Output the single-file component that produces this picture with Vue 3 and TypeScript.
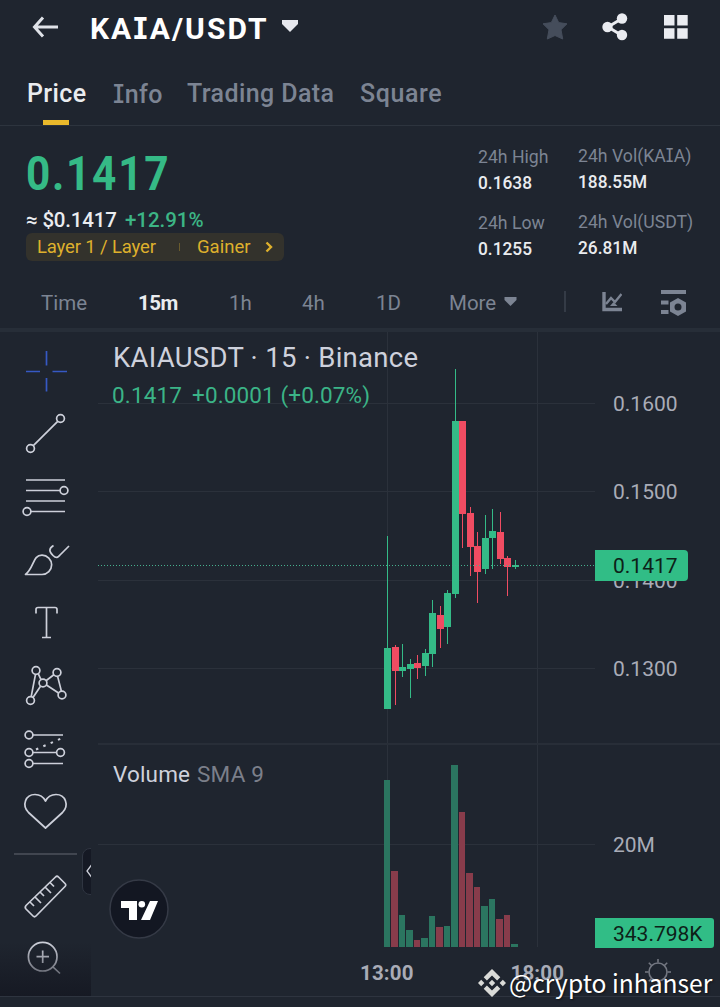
<script setup lang="ts">
interface Candle {
  x: number
  up: boolean
  high: number
  top: number
  bottom: number
  low: number
}
interface VolumeBar {
  x: number
  w: number
  top: number
  up: boolean
}

const tabs = ['Price', 'Info', 'Trading Data', 'Square']
const intervals = ['Time', '15m', '1h', '4h', '1D']

const stats = [
  [
    { label: '24h High', value: '0.1638' },
    { label: '24h Low', value: '0.1255' },
  ],
  [
    { label: '24h Vol(KAIA)', value: '188.55M' },
    { label: '24h Vol(USDT)', value: '26.81M' },
  ],
]

// [left, rising, high, body top, body bottom, low] in chart units
const rawCandles: [number, boolean, number, number, number, number][] = [
  [384, true, 536, 648, 709, 709],
  [392, false, 645, 647, 671, 705],
  [399, true, 644, 667, 671, 677],
  [407, true, 659, 664, 669, 698],
  [414, false, 655, 663, 668, 679],
  [422, true, 649, 653, 666, 676],
  [429, true, 600, 613, 654, 667],
  [437, false, 606, 615, 629, 648],
  [444, true, 590, 593, 627, 644],
  [452, true, 369, 421, 594, 598],
  [459, false, 421, 421, 514, 548],
  [467, false, 507, 513, 547, 576],
  [474, false, 532, 546, 572, 603],
  [482, true, 515, 538, 569, 574],
  [489, true, 509, 531, 538, 569],
  [497, false, 512, 532, 559, 564],
  [504, false, 556, 558, 567, 596],
  [512, true, 560, 565, 567, 569],
]
const candles: Candle[] = rawCandles.map(([x, up, high, top, bottom, low]) => ({ x, up, high, top, bottom, low }))

const volumeTops = [780, 871, 915, 930, 940, 938, 916, 927, 926, 765, 812, 873, 887, 906, 899, 919, 915, 944]
const volumes: VolumeBar[] = volumeTops.map((top, i) => ({
  x: 384 + Math.floor(i * 7.5),
  w: i % 2 ? 7 : 6,
  top,
  up: candles[i].up,
}))

const priceLines = [403, 491, 580, 668, 844]
const axisLabels = [
  { y: 411, text: '0.1600' },
  { y: 499, text: '0.1500' },
  { y: 588, text: '0.1400' },
  { y: 676, text: '0.1300' },
  { y: 852, text: '20M' },
]
const rays = [0, 45, 90, 135, 180, 225, 270, 315]
</script>

<template>
  <div class="screen">
    <header class="header">
      <svg class="back" width="28" height="24" viewBox="0 0 28 24"><path d="M12 2.500 3.500 12l8.500 9.500M3.500 12H27" /></svg>
      <h1 class="pair">KA<span class="slab">I</span>A/USDT</h1>
      <svg class="pair-caret" width="16" height="12" viewBox="0 0 16 12"><path d="M0 0h16v4l-8 8-8-8z" /></svg>
      <div class="actions">
        <svg width="28" height="28" viewBox="0 0 28 28"><path class="star" d="m14 2 3.700 7.600 8.300 1.200-6 5.900 1.700 9.300L14 22.500 6.300 26 8 16.700 2 10.800l8.300-1.200z" /></svg>
        <svg width="28" height="28" viewBox="0 0 28 28" class="share">
          <path d="M7 14 21 5.500M7 14l14 8.500" />
          <circle cx="6.500" cy="14" r="5.200" /><circle cx="21" cy="5.500" r="5.200" /><circle cx="21" cy="22" r="5.200" />
        </svg>
        <svg width="24" height="24" viewBox="0 0 24 24" class="apps"><path d="M0 0h10.500v10.500H0zM13.200 0h10.500v10.500H13.200zM0 13.300h10.500v10.500H0zM13.200 13.300h10.500v10.500H13.200z" /></svg>
      </div>
    </header>

    <nav class="tabs">
      <span v-for="(tab, i) in tabs" :key="tab" class="tab" :class="[{ active: i === 0 }, 'tab-' + i]">
        <template v-if="tab === 'Info'"><span class="slab">I</span>nfo</template>
        <template v-else>{{ tab }}</template>
      </span>
    </nav>

    <section class="summary">
      <div class="quote">
        <div class="last">0.1417</div>
        <div class="fiat"><span class="usd">≈ $0.1417</span><span class="change">+12.91%</span></div>
        <div class="tags">
          <span class="tag-layer">Layer 1 / Layer</span>
          <i class="tag-sep"></i>
          <span class="tag-gainer">Gainer</span>
          <svg width="8" height="12" viewBox="0 0 8 12"><path d="m1.500 1.500 4.500 4.500-4.500 4.500" /></svg>
        </div>
      </div>
      <div v-for="(col, c) in stats" :key="c" class="stats" :class="'stats-' + c">
        <div v-for="s in col" :key="s.label" class="stat">
          <div class="stat-label">
            <template v-if="s.label.includes('KAIA')">24h Vol(KA<span class="slab">I</span>A)</template>
            <template v-else>{{ s.label }}</template>
          </div>
          <div class="stat-value">{{ s.value }}</div>
        </div>
      </div>
    </section>

    <nav class="intervals">
      <span v-for="t in intervals" :key="t" :class="{ chosen: t === '15m' }">{{ t }}</span>
      <span class="more">More<svg width="13" height="9" viewBox="0 0 13 9"><path d="M.5 0h12v3L6.500 9 .5 3z" /></svg></span>
      <i class="divider"></i>
      <svg width="20" height="20" viewBox="0 0 20 20" class="tool-line">
        <path d="M2 0v17.500h18" stroke-width="3.400" /><path d="m4 12 5-6 4 4 6.500-8" stroke-width="2.400" /><path class="solid" d="m8 14 3.500-4 4 4z" />
      </svg>
      <svg width="25" height="26" viewBox="0 0 25 26" class="tool-solid">
        <path d="M0 0h25v4H0zM0 10.500h7.500v4H0zM0 20h7.500v4H0z" />
        <path fill-rule="evenodd" d="m17 8 8 4.500v9L17 26l-8-4.500v-9zM17 13.500a3.500 3.500 0 1 0 0 7 3.500 3.500 0 0 0 0-7z" />
      </svg>
    </nav>

    <main class="workspace">
      <aside class="toolbar">
        <svg class="cross" viewBox="0 0 91 63"><path d="M26 31.500h14M52.500 31.500H67M46.500 11v14.500M46.500 38v13.500" /></svg>
        <svg viewBox="0 0 91 63"><circle cx="60.500" cy="15.500" r="3.900" /><circle cx="30.500" cy="45.500" r="3.900" /><path d="M57.700 18.300 33.300 42.700" /></svg>
        <svg viewBox="0 0 91 63"><path d="M26 14h39M26 24.500h34M26 35h39M31 45.500h34" /><circle cx="64" cy="24.500" r="3.900" /><circle cx="27" cy="45.500" r="3.900" /></svg>
        <svg viewBox="0 0 91 63"><path d="M25.500 45.500H42A9.600 9.600 0 1 0 42 26.200C32.500 26.200 34.500 38 25.500 45.500ZM53.500 16.500C48.500 19.500 49 22.500 53 26.500S58.500 27.500 60.500 25.500L69 17" /></svg>
        <svg viewBox="0 0 91 63"><path d="M36 21.500v-4q0-2 2-2h17q2 0 2 2v4M46.500 15.500v30M42 45.500h9" /></svg>
        <svg viewBox="0 0 91 63">
          <circle cx="36" cy="15.500" r="3.900" /><circle cx="57" cy="17.500" r="3.900" /><circle cx="43" cy="28" r="3.900" /><circle cx="30.500" cy="45.500" r="3.900" /><circle cx="62" cy="40" r="3.900" />
          <path d="M35.500 19.400 31.200 41.600M38.200 18.700l2.800 6M46 25.700l7.800-5.900M57.600 21.400l3.800 14.700M46.400 30l12.200 8M40.500 31.200 33 42.500" />
        </svg>
        <svg viewBox="0 0 91 63">
          <circle cx="29" cy="17" r="3.900" /><circle cx="29" cy="34.500" r="3.900" /><circle cx="60.500" cy="34.500" r="3.900" /><circle cx="29" cy="45.500" r="3.900" />
          <path d="M33 17h30M33 34.500h23.500M33 45.500h30" /><path stroke-dasharray="2.500 5.500" stroke-width="2" d="m36 31.500 25-11" />
        </svg>
        <svg viewBox="0 0 91 63"><path d="M45.500 47 28.500 31.500C21.500 24 25.500 13.500 35 13.500c5.500 0 8.500 2.500 10.500 6.500 2-4 5-6.500 10.500-6.500 9.500 0 13.500 10.500 6.500 18Z" /></svg>
        <hr class="rule" />
        <svg viewBox="0 0 91 63"><path d="M26 40.500 55.500 12q1.500-1.500 3 0l6.500 6.500q1.500 1.500 0 3L36 51q-1.500 1.500-3 0l-7-7q-1.500-1.700 0-3.500ZM30 37l4 4M35 32l6 6M40 27l4 4M45 22l6 6M50 17.500l4 4" /></svg>
        <svg viewBox="0 0 91 63"><circle cx="42.700" cy="28.700" r="14.300" /><path d="M36.500 28.700h12.500M42.700 22.500V35M53 39l7 6.500" /></svg>
        <div class="fade"></div>
        <div class="collapse"><svg width="6" height="14" viewBox="0 0 6 14"><path d="M5.500 1 1 7l4.500 6" /></svg></div>
      </aside>

      <svg class="chart" width="629" height="664" viewBox="91 332 629 664">
        <g class="grid">
          <rect v-for="y in priceLines" :key="y" x="98" :y="y" width="497" height="1" />
          <rect x="387" y="332" width="1" height="615" /><rect x="537" y="332" width="1" height="615" />
          <rect class="pane" x="98" y="743" width="622" height="2" />
        </g>
        <g v-for="(v, i) in volumes" :key="'v' + i" :class="v.up ? 'vol-up' : 'vol-down'">
          <rect :x="v.x" :y="v.top" :width="v.w" :height="947 - v.top" />
        </g>
        <g v-for="(c, i) in candles" :key="'c' + i" :class="c.up ? 'up' : 'down'">
          <rect :x="c.x + 3" :y="c.high" width="1" :height="c.low - c.high" />
          <rect :x="c.x" :y="c.top" width="7" :height="c.bottom - c.top" />
        </g>
        <path class="last-line" d="M98 565.500H595" />

        <text class="symbol" x="113" y="367" textLength="305">KAIAUSDT · 15 · Binance</text>
        <text class="delta" x="112" y="403" textLength="70">0.1417</text>
        <text class="delta" x="192" y="403" textLength="178">+0.0001 (+0.07%)</text>
        <text class="vol-title" x="113" y="782" textLength="77">Volume</text>
        <text class="vol-title dim" x="197" y="782" textLength="67">SMA 9</text>

        <text v-for="l in axisLabels" :key="l.text" class="axis" x="613" :y="l.y">{{ l.text }}</text>
        <path class="badge" d="M595 550h89q4 0 4 4v23q0 4-4 4h-89z" />
        <text class="badge-text" x="613" y="573">0.1417</text>
        <path class="badge" d="M595 918h116q3 0 3 3v24q0 3-3 3h-116z" />
        <text class="badge-text" x="613" y="941">343.798K</text>

        <text class="time" x="360" y="980" textLength="53.500">13:00</text>
        <text class="time" x="510.500" y="980" textLength="53.500">18:00</text>

        <g class="gear">
          <circle cx="658" cy="972" r="9" />
          <path v-for="r in rays" :key="r" d="M667.500 972h3.500" :transform="`rotate(${r} 658 972)`" />
        </g>

        <g class="brand">
          <circle cx="139" cy="909" r="29" />
          <path d="M121 901h16v19h-8v-12h-8zM150 901h8l-8 19h-9z" /><path d="M138.500 904.300a3.300 3.300 0 1 1 6.600 0 3.300 3.300 0 0 1-6.600 0z" />
        </g>
      </svg>
    </main>

    <div class="watermark">
      <svg width="28" height="28" viewBox="0 0 28 28"><path d="m14 0 8.300 8.300-3.200 3.200L14 6.400l-5.100 5.100-3.200-3.200zM3.200 10.800 6.400 14l-3.200 3.200L0 14zM14 10.800l3.200 3.200-3.200 3.200-3.200-3.200zM24.800 10.800 28 14l-3.200 3.200-3.200-3.200zM8.900 16.500l5.100 5.100 5.100-5.100 3.200 3.200L14 28l-8.300-8.300z" /></svg>
      <span>@crypto inhanser</span>
    </div>
  </div>
</template>

<style>
body {
  background: #1f252f;
}
</style>

<style scoped>
.screen {
  position: relative;
  width: 720px;
  height: 1007px;
  overflow: hidden;
  background: #1f252f;
  color: #eaecef;
  font-family: Roboto, "Liberation Sans", sans-serif;
}
svg {
  display: block;
  flex: none;
}
.slab {
  font-family: Inter, Roboto, sans-serif;
  font-feature-settings: "cv08" 1;
}
.header {
  display: flex;
  align-items: center;
  height: 54px;
  padding: 0 32px 0 31px;
}
.back {
  fill: none;
  stroke: #dfe2e8;
  stroke-width: 3;
}
.pair {
  margin: 2px 0 0 31px;
  width: 178px;
  font-size: 30px;
  line-height: 54px;
  font-weight: 700;
  letter-spacing: 2.050px;
  color: #fff;
  white-space: nowrap;
}
.pair-caret {
  margin: -2px 0 0 14px;
  fill: #e6e8ee;
}
.actions {
  display: flex;
  align-items: center;
  margin-left: auto;
}
.actions svg + svg {
  margin-left: 32px;
}
.actions .apps {
  margin-left: 35px;
}
.star {
  fill: #454d5b;
  stroke: #454d5b;
  stroke-linejoin: round;
}
.share {
  fill: #eaecf1;
}
.share path {
  stroke: #eaecf1;
  stroke-width: 3;
}
.apps {
  fill: #eaecf1;
}
.tabs {
  display: flex;
  height: 71px;
  padding: 0 27px;
  border-bottom: 1px solid #2d343e;
}
.tab {
  position: relative;
  line-height: 80px;
  font-size: 25px;
  font-weight: 500;
  letter-spacing: 0.400px;
  color: #7c8493;
  white-space: nowrap;
}
.tab.active {
  color: #eaecef;
}
.tab.active::after {
  content: "";
  position: absolute;
  left: 16px;
  bottom: 0;
  width: 26px;
  height: 5px;
  background: #eab92b;
}
.tab-0 {
  width: 86px;
}
.tab-1 {
  width: 74px;
}
.tab-2 {
  width: 173px;
}
.tab-3 {
  letter-spacing: 0.600px;
}
.summary {
  display: flex;
  height: 152px;
}
.quote {
  width: 452px;
  padding: 17px 0 0 26px;
}
.last {
  font-size: 49px;
  line-height: 60px;
  font-weight: 700;
  letter-spacing: 2px;
  color: #35ba86;
  transform: translateY(1px) scaleX(0.865);
  transform-origin: left;
}
.fiat {
  display: flex;
  margin-top: 4px;
  font-size: 20.500px;
  line-height: 26px;
}
.usd {
  width: 99px;
  font-weight: 500;
  letter-spacing: -0.200px;
}
.change {
  font-weight: 500;
  letter-spacing: -0.050px;
  color: #3cb585;
}
.tags {
  display: flex;
  align-items: center;
  box-sizing: border-box;
  width: 258px;
  height: 28px;
  padding-left: 11px;
  border-radius: 6px;
  background: #33322c;
  color: #deb02c;
  font-size: 18.500px;
}
.tag-layer {
  width: 142px;
  letter-spacing: -0.150px;
}
.tag-sep {
  width: 1px;
  height: 8px;
  margin-right: 17px;
  background: #6a5c2d;
}
.tag-gainer {
  width: 68px;
}
.tags svg {
  fill: none;
  stroke: #deb02c;
  stroke-width: 2.400;
}
.stats {
  display: grid;
  align-content: start;
  gap: 14px;
  padding-top: 18px;
  width: 100px;
}
.stats-1 {
  padding-top: 16px;
  width: 142px;
}
.stat {
  font-size: 18.500px;
  line-height: 26px;
  white-space: nowrap;
}
.stat-label {
  color: #7c8493;
  transform: scaleX(0.955);
  transform-origin: left;
}
.stat-value {
  font-weight: 500;
  transform: scaleX(0.935);
  transform-origin: left;
}
.intervals {
  display: grid;
  grid-template-columns: 97px 91px 73px 74px 73px 115px 38px 59px auto;
  align-items: center;
  height: 50px;
  padding-left: 41px;
  border-bottom: 4px solid #272e38;
  color: #7c8493;
  font-size: 20.500px;
}
.chosen {
  color: #eaecef;
  font-weight: 700;
  letter-spacing: -0.500px;
}
.more {
  display: flex;
  align-items: center;
}
.more svg {
  margin: -4px 0 0 8px;
  fill: #7c8493;
}
.divider {
  width: 2px;
  height: 21px;
  margin-top: -3px;
  background: #343b46;
}
.tool-line {
  margin-top: -2px;
  fill: none;
  stroke: #7c8493;
}
.tool-line .solid {
  fill: #7c8493;
  stroke: none;
}
.tool-solid {
  margin-top: -1px;
  fill: #7c8493;
}
.workspace {
  display: flex;
  height: 664px;
  border-bottom: 1px solid #2e343f;
}
.toolbar {
  position: relative;
  box-sizing: border-box;
  width: 91px;
  height: 664px;
  padding-top: 8px;
  overflow: hidden;
}
.toolbar > svg {
  width: 91px;
  height: 63px;
  fill: none;
  stroke: #cdd0da;
  stroke-width: 1.700;
  stroke-linejoin: round;
}
.toolbar > .cross {
  stroke: #3659c4;
}
.rule {
  height: 2px;
  margin: 9px 14px 10px;
  border: 0;
  background: #414650;
}
.fade {
  position: absolute;
  inset: auto 0 0;
  height: 54px;
  background: linear-gradient(rgba(21, 24, 34, 0), rgba(21, 24, 34, 0.9));
}
.collapse {
  position: absolute;
  left: 82px;
  top: 516px;
  box-sizing: border-box;
  width: 18px;
  height: 47px;
  padding: 15px 0 0 3px;
  border: 1.500px solid #2f3541;
  border-radius: 8px;
  background: #151924;
}
.collapse svg {
  fill: none;
  stroke: #cdd0da;
  stroke-width: 1.300;
}
.grid {
  fill: #2b313b;
}
.grid .pane {
  fill: #282e38;
}
.up {
  fill: #34bb87;
}
.down {
  fill: #f04c62;
}
.vol-up {
  fill: #2b7560;
}
.vol-down {
  fill: #883c4b;
}
.last-line {
  stroke: #46b08e;
  stroke-dasharray: 1 2;
}
.symbol {
  font-size: 27.500px;
  fill: #ced1dc;
}
.delta {
  font-size: 22.500px;
  fill: #3bb487;
  white-space: pre;
}
.vol-title {
  font-size: 22.500px;
  fill: #ced1dc;
}
.vol-title.dim {
  fill: #7b7f8a;
}
.axis {
  font-size: 21px;
  fill: #a9acb7;
}
.badge {
  fill: #31bd86;
}
.badge-text {
  font-size: 21px;
  fill: #0d2118;
}
.time {
  font-size: 20.500px;
  font-weight: 700;
  fill: #a9acb7;
}
.gear {
  fill: none;
  stroke: #737781;
  stroke-width: 1.600;
}
.brand {
  fill: #fff;
}
.brand circle {
  fill: #131722;
  stroke: #353a46;
  stroke-width: 1.500;
}
.watermark {
  position: absolute;
  left: 478px;
  top: 965px;
  display: flex;
  align-items: center;
  gap: 3px;
  height: 36px;
  font-family: "Noto Sans CJK SC", "Noto Sans", sans-serif;
  font-size: 24.600px;
  line-height: 36px;
  color: #fff;
  white-space: nowrap;
  text-shadow: 1px 1px 2px rgba(0, 0, 0, 0.5);
}
.watermark span {
  margin-top: -3px;
}
.watermark svg {
  fill: #dadbd8;
}
</style>
